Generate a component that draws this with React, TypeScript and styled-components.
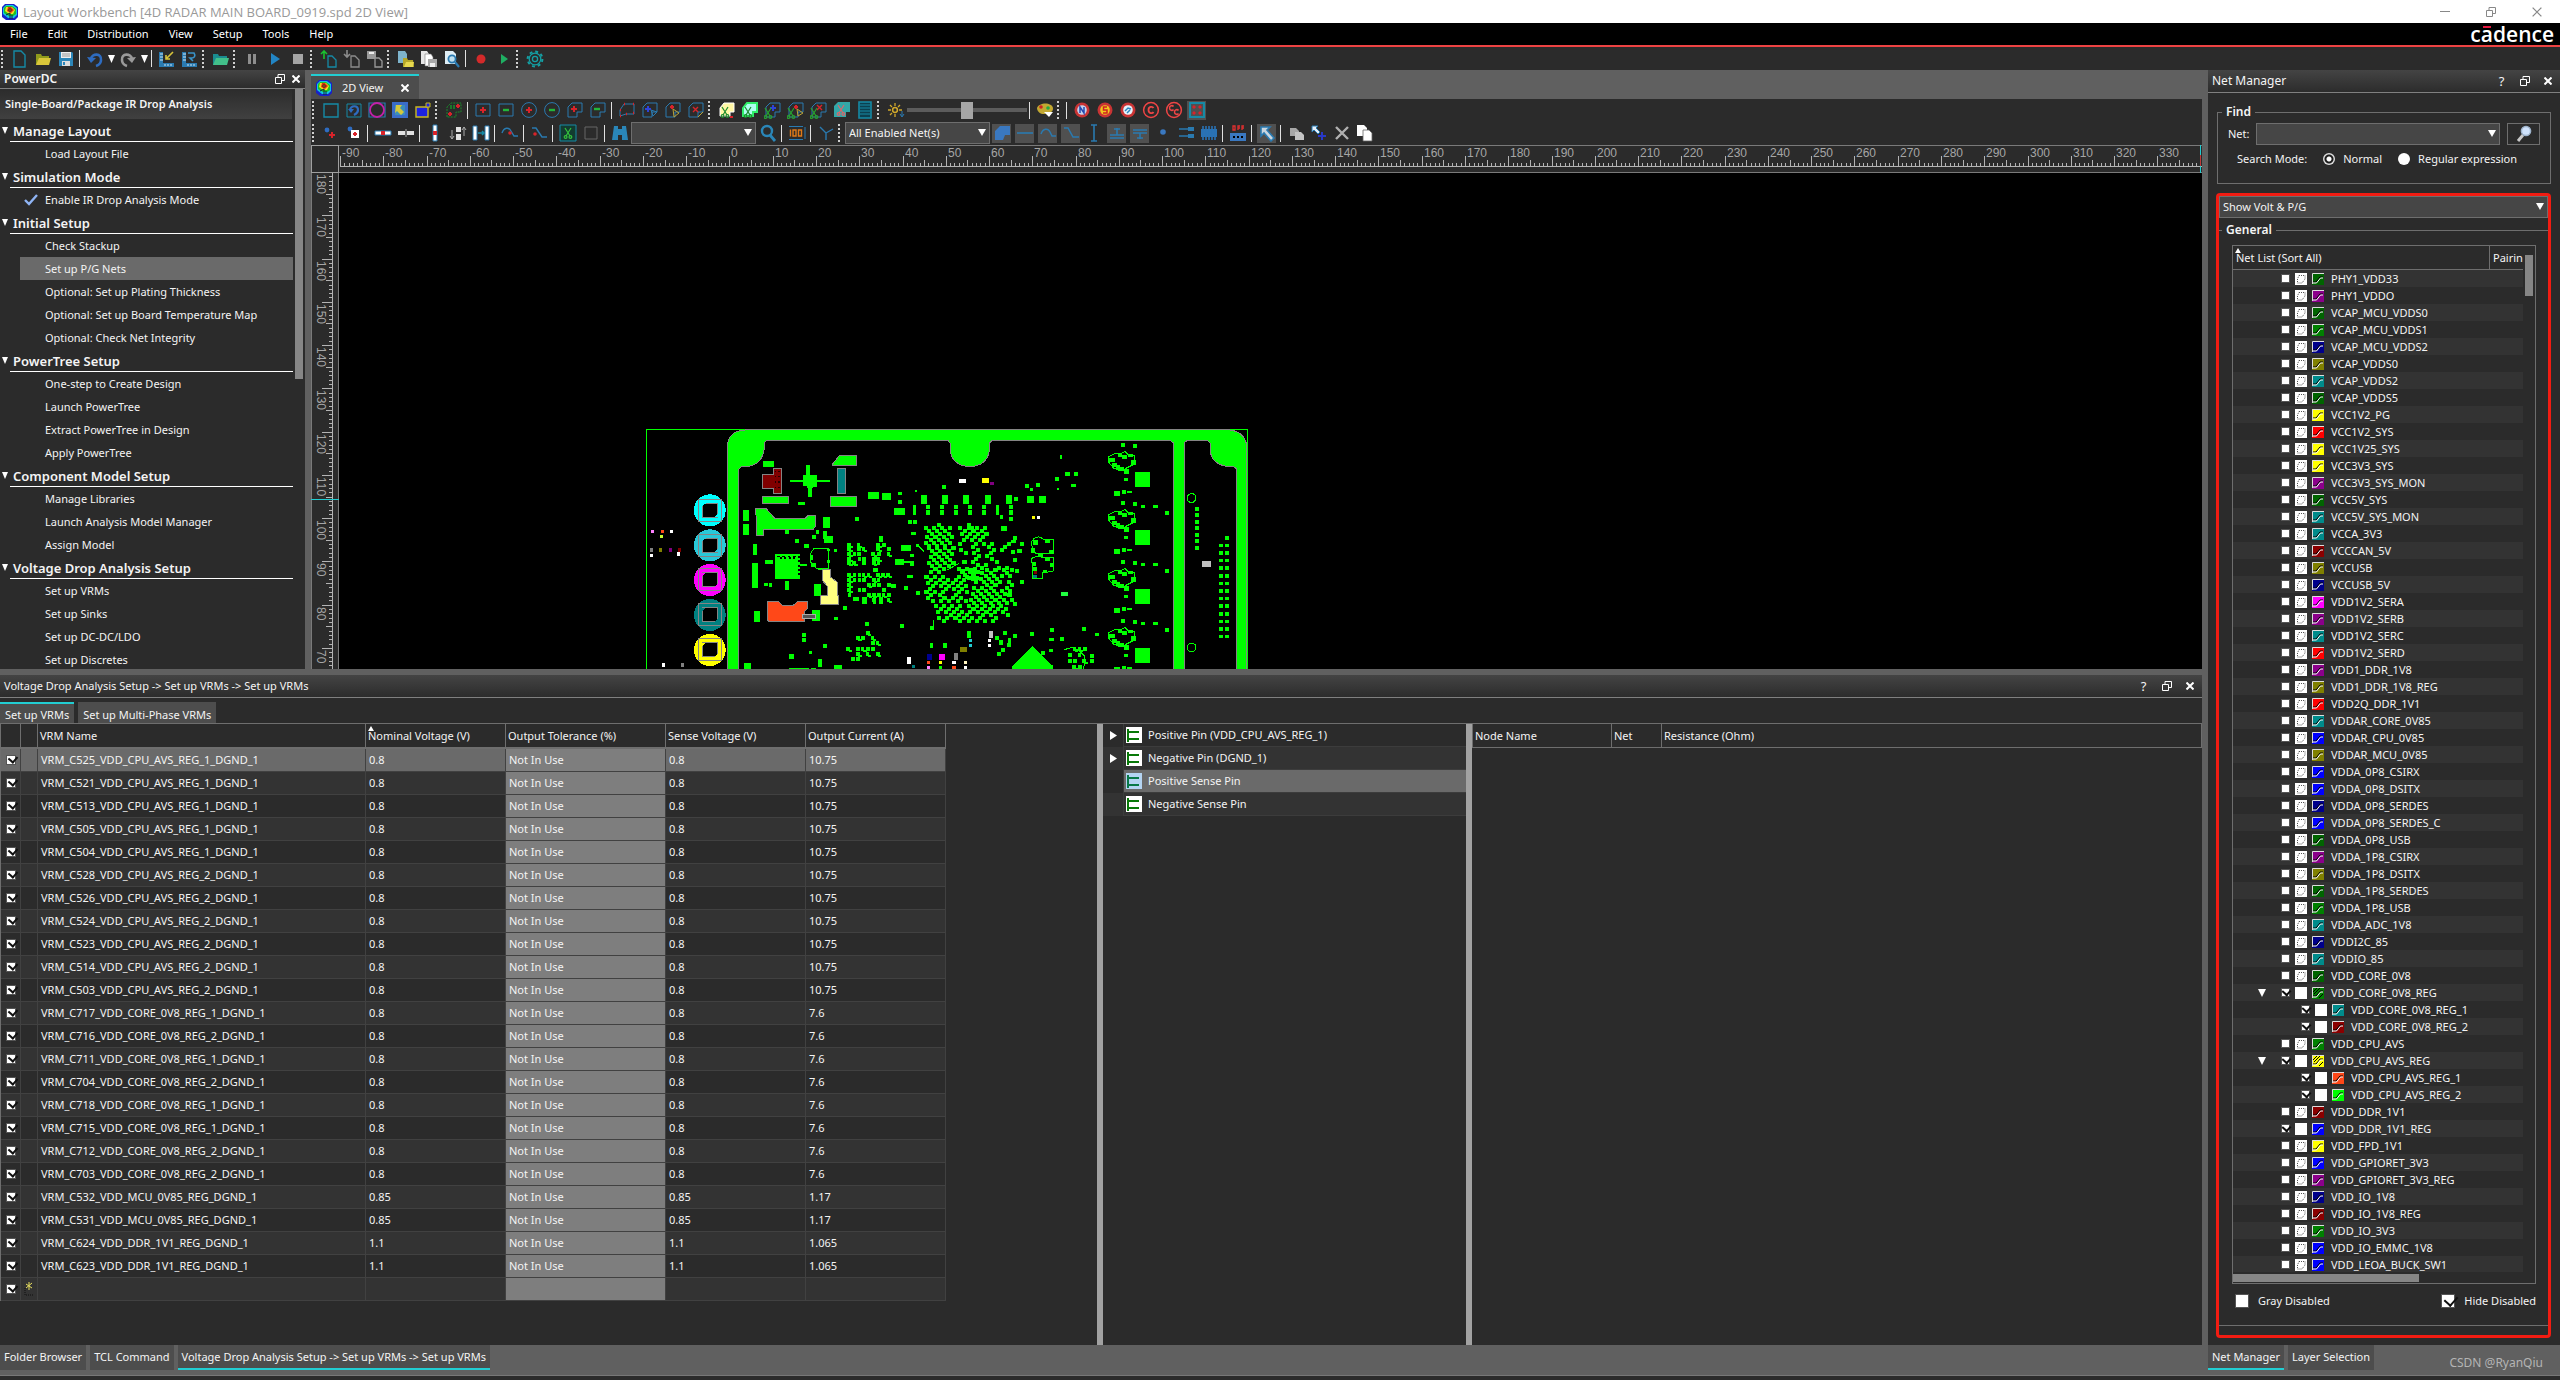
import React from 'react';
import styled, { createGlobalStyle, css } from 'styled-components';

const C = {
  panel: '#2b2b2b',
  stripe: '#333333',
  frame: '#606060',
  line: '#6e6e6e',
  field: '#464646',
  tab: '#4d4d4d',
  select: '#6a6a6a',
  text: '#f4f4f4',
  cyan: '#22cdd2',
  blue: '#2a7ab0',
  teal: '#168aa6',
  red: '#f21c12',
};

const Global = createGlobalStyle`
  * { box-sizing: border-box; }
  html, body { margin: 0; background: ${C.panel}; }
  body, button, input, select { font-family: "Noto Sans", "Open Sans", sans-serif; font-size: 11px; line-height: 16px; color: ${C.text}; }
  button { padding: 0; border: 0; background: none; }
  ul { list-style: none; margin: 0; padding: 0; }
  svg { display: block; }
`;

/* ---------- shell ---------- */
const Shell = styled.div`
  height: 100vh;
  display: flex;
  flex-direction: column;
  overflow: hidden;
  background: ${C.panel};
`;
const TitleBar = styled.header`
  display: flex;
  align-items: center;
  height: 23px;
  padding-left: 2px;
  background: #fff;
  color: #999;
`;
const TitleText = styled.h1`
  flex: 1;
  margin: 0 0 0 5px;
  font-family: "Open Sans", sans-serif;
  font-size: 13px;
  font-weight: 400;
  line-height: 20px;
`;
const WindowButton = styled.button`
  width: 46px;
  height: 23px;
  display: grid;
  place-items: center;
`;
const MenuBar = styled.nav`
  display: flex;
  align-items: center;
  height: 24px;
  background: #000;
  border-bottom: 2px solid #ee4343;
`;
const MenuItem = styled.button`
  padding: 0 10px;
  color: #fff;
`;
const Brand = styled.div`
  margin-left: auto;
  padding-right: 6px;
  font: 600 21px/22px "Open Sans", sans-serif;
  color: #fff;
`;
const Accent = styled.span`
  position: relative;
  &::before {
    content: '';
    position: absolute;
    left: 2px;
    right: 2px;
    top: 6px;
    height: 2px;
    background: #e4173e;
  }
`;
const Bar = styled.div<{ $h: number }>`
  display: flex;
  align-items: center;
  height: ${p => p.$h}px;
  background: ${C.panel};
`;
const Workspace = styled.main`
  flex: 1;
  min-height: 0;
  display: grid;
  grid-template-columns: minmax(0, 1fr) 352px;
  column-gap: 6px;
  background: ${C.frame};
  border-bottom: 1px solid #777;
`;
const MainColumn = styled.div`
  display: grid;
  grid-template-rows: minmax(0, 605fr) minmax(0, 670fr) 30px;
  min-height: 0;
  & > :first-child { margin-bottom: 6px; }
`;
const TopRow = styled.div`
  display: grid;
  grid-template-columns: 305px minmax(0, 1fr);
  column-gap: 6px;
  min-height: 0;
`;
const StatusBar = styled.footer`
  height: 4px;
  background: ${C.panel};
`;
const PanelHeader = styled.div<{ $h: number }>`
  display: flex;
  align-items: center;
  height: ${p => p.$h}px;
  padding: 0 1px 0 4px;
  background: linear-gradient(#444, #2c2c2c);
  border-bottom: 1px solid #808080;
`;
const PanelTitle = styled.h2<{ $bold?: boolean; $big?: boolean }>`
  flex: 1;
  margin: 0;
  font-size: ${p => (p.$big ? 12 : 11)}px;
  line-height: 16px;
  font-weight: ${p => (p.$bold ? 600 : 400)};
`;
const HeadButton = styled.button<{ $w?: number }>`
  width: ${p => p.$w ?? 23}px;
  height: 16px;
  display: grid;
  place-items: center;
  font-size: 13px;
`;

/* ---------- tool bars ---------- */
const Grip = styled.span`
  flex: none;
  width: 8px;
  height: 18px;
  background: repeating-linear-gradient(#d0d0d0 0 2px, transparent 2px 4px) 1px 0 / 2px 100% no-repeat;
`;
const Sep = styled.span`
  flex: none;
  width: 6px;
  height: 17px;
  background: linear-gradient(#e0e0e0, #e0e0e0) 2px 0 / 1px 100% no-repeat;
`;
const ToolButton = styled.button<{ $on?: boolean }>`
  flex: none;
  width: 23px;
  height: 22px;
  display: grid;
  place-items: center;
  background: ${p => (p.$on ? 'linear-gradient(#505050, #505050) center / 19px 19px no-repeat' : 'none')};
`;
const CaretButton = styled.button`
  flex: none;
  width: 10px;
  height: 20px;
  display: grid;
  place-items: center;
`;
const Slider = styled.input`
  width: 120px;
  height: 18px;
  margin: 0;
  appearance: none;
  background: linear-gradient(#5c5c5c, #5c5c5c) center / 100% 4px no-repeat;
  &::-webkit-slider-thumb {
    appearance: none;
    width: 12px;
    height: 17px;
    background: #a6a6a6;
  }
`;
const ComboWrap = styled.span<{ $w?: number }>`
  position: relative;
  display: block;
  flex: ${p => (p.$w ? 'none' : '1')};
  width: ${p => (p.$w ? p.$w + 'px' : 'auto')};
  &::after {
    content: '';
    position: absolute;
    right: 4px;
    top: 7px;
    border: 4px solid transparent;
    border-top: 7px solid #fff;
    border-bottom: 0;
    pointer-events: none;
  }
`;
const Combo = styled.select`
  display: block;
  width: 100%;
  height: 22px;
  padding: 0 14px 0 3px;
  appearance: none;
  border: 1px solid ${C.line};
  border-radius: 0;
  background: ${C.field};
`;

/* ---------- workflow tree ---------- */
const Panel = styled.section`
  display: flex;
  flex-direction: column;
  min-width: 0;
  min-height: 0;
  background: ${C.panel};
`;
const FlowBody = styled.div`
  flex: 1;
  min-height: 0;
  display: grid;
  grid-template-columns: minmax(0, 1fr) 12px;
  overflow: hidden;
`;
const FlowTitle = styled.h3`
  margin: 0 1px 0 0;
  padding: 7px 5px;
  font-size: 11px;
  line-height: 16px;
  font-weight: 600;
  background: linear-gradient(#2c2c2c, #404040);
`;
const FlowList = styled.div`
  overflow: hidden;
`;
const FlowGroup = styled.h4`
  display: flex;
  align-items: center;
  gap: 4px;
  height: 23px;
  margin: 0;
  padding-left: 1px;
  font-size: 13px;
  line-height: 16px;
  font-weight: 600;
  background: linear-gradient(#fff, #fff) 10px 100% / 100% 1px no-repeat;
`;
const FlowItem = styled.button<{ $on?: boolean }>`
  display: flex;
  align-items: center;
  width: calc(100% - 20px);
  height: 23px;
  margin-left: 20px;
  text-align: left;
  background: ${p => (p.$on ? C.select : 'transparent')};
`;
const FlowMark = styled.span`
  width: 25px;
  padding-left: 4px;
`;
const ScrollTrack = styled.div`
  padding-left: 2px;
`;
const ScrollThumb = styled.div<{ $w: number; $h: string }>`
  width: ${p => p.$w}px;
  height: ${p => p.$h};
  background: #868686;
`;

/* ---------- 2D view ---------- */
const TabStrip = styled.div`
  display: flex;
  align-items: flex-end;
  height: 29px;
  background: ${C.frame};
`;
const ViewTab = styled.div`
  display: flex;
  align-items: center;
  gap: 10px;
  height: 25px;
  padding: 0 3px 0 5px;
  background: ${C.tab};
  border-top: 2px solid ${C.cyan};
`;
const ViewGrid = styled.div`
  flex: 1;
  min-height: 0;
  display: grid;
  grid-template-columns: 28px minmax(0, 1fr);
  grid-template-rows: 28px minmax(0, 1fr);
  background: #000;
`;
const RulerCell = styled.div`
  overflow: hidden;
  min-height: 0;
  background: ${C.panel};
  & > svg { width: 100%; height: 100%; }
  & text { font: 12px "Liberation Sans", Arial, sans-serif; fill: #a6a6a6; }
`;
const Corner = styled.div`
  border: 1px solid #a0a0a0;
  background: ${C.panel};
`;
const Board = styled.div`
  overflow: hidden;
  min-height: 0;
  & > svg { width: 100%; height: 100%; }
`;

/* ---------- bottom dock ---------- */
const DockTabs = styled.div`
  display: flex;
  gap: 4px;
  padding-top: 4px;
  border-bottom: 1px solid ${C.line};
`;
const DockTab = styled.button<{ $on?: boolean }>`
  height: 21px;
  padding: 3px 5px 0;
  background: ${C.tab};
  border-top: 2px solid ${p => (p.$on ? C.cyan : C.tab)};
`;
const DockBody = styled.div`
  flex: 1;
  min-height: 0;
  display: grid;
  grid-template-columns: minmax(0, 1097fr) minmax(0, 369fr) minmax(0, 736fr);
`;
const Pane = styled.div<{ $split?: boolean }>`
  overflow: hidden;
  min-width: 0;
  ${p => p.$split && css`
    border-left: 6px solid #a2a2a2;
  `}
`;
const Grid = styled.table`
  border-collapse: separate;
  border-spacing: 0;
  border-left: 1px solid ${C.line};
  table-layout: fixed;
`;
const Th = styled.th<{ $w?: number }>`
  position: relative;
  width: ${p => (p.$w ? p.$w + 'px' : 'auto')};
  height: 25px;
  padding: 0 2px;
  text-align: left;
  font-weight: 400;
  white-space: nowrap;
  border-right: 1px solid ${C.line};
  border-bottom: 2px solid ${C.line};
`;
const SortMark = styled.span`
  position: absolute;
  left: 2px;
  top: 2px;
  border: 3px solid transparent;
  border-bottom: 5px solid #fff;
  border-top: 0;
`;
const Tr = styled.tr<{ $on?: boolean; $odd?: boolean }>`
  background: ${p => (p.$on ? C.select : p.$odd ? C.stripe : C.panel)};
`;
const Td = styled.td<{ $dim?: boolean; $check?: boolean }>`
  height: 23px;
  padding: 0 2px 0 ${p => (p.$check ? 5 : 3)}px;
  white-space: nowrap;
  border-right: 1px solid #414141;
  border-bottom: 1px solid #414141;
  ${p => p.$dim && css`
    background: #7e7e7e;
  `}
`;
const WideTable = styled(Grid)`
  width: 100%;
`;
const ThinTh = styled(Th)`
  height: 24px;
  border-bottom-width: 1px;
`;
const PinRow = styled.li<{ $on?: boolean; $odd?: boolean }>`
  display: grid;
  grid-template-columns: 20px minmax(0, 1fr);
  height: 23px;
  background: ${p => (p.$odd ? C.stripe : C.panel)};
`;
const PinArrow = styled.span`
  display: grid;
  place-items: center;
`;
const PinLabel = styled.span<{ $on?: boolean }>`
  display: flex;
  align-items: center;
  gap: 6px;
  padding-left: 2px;
  border-left: 1px solid #3c3c3c;
  border-bottom: 1px solid #3c3c3c;
  background: ${p => (p.$on ? C.select : 'transparent')};
`;
const FootTabs = styled.div`
  display: flex;
  align-items: flex-start;
  gap: 4px;
  height: 30px;
  background: ${C.frame};
`;
const FootTab = styled.button<{ $on?: boolean }>`
  height: 25px;
  padding: 0 4px;
  background: ${C.tab};
  border-bottom: 2px solid ${p => (p.$on ? C.cyan : C.tab)};
`;

/* ---------- net manager ---------- */
const NetColumn = styled.aside`
  display: flex;
  flex-direction: column;
  min-height: 0;
  background: ${C.panel};
`;
const FindBox = styled.fieldset`
  min-width: 0;
  margin: 11px 9px 0;
  padding: 3px 10px 16px;
  border: 1px solid ${C.line};
`;
const Legend = styled.legend`
  padding: 0 4px;
  font-size: 12px;
  line-height: 16px;
  font-weight: 600;
`;
const FindLegend = styled(Legend)`
  margin-left: -6px;
`;
const FindRow = styled.div`
  display: flex;
  align-items: center;
  gap: 7px;
`;
const FindButton = styled.button`
  width: 33px;
  height: 22px;
  display: grid;
  place-items: center;
  border: 1px solid ${C.line};
`;
const ModeRow = styled.div`
  display: flex;
  align-items: center;
  gap: 8px;
  padding: 6px 0 0 9px;
`;
const RadioLabel = styled.label`
  display: flex;
  align-items: center;
  gap: 8px;
  margin-left: 8px;
`;
const Radio = styled.input`
  appearance: none;
  width: 12px;
  height: 12px;
  margin: 0;
  border-radius: 50%;
  background: #fff;
  &:checked {
    background: radial-gradient(circle, #fff 0 2px, #1c1c1c 3px 4px, #ddd 5px);
  }
`;
const NetFrame = styled.div`
  flex: 1;
  min-height: 0;
  display: flex;
  flex-direction: column;
  margin: 9px 9px 7px 8px;
  border: 3px solid ${C.red};
  border-radius: 4px;
`;
const GeneralBox = styled.fieldset`
  flex: 1;
  min-width: 0;
  min-height: 0;
  display: flex;
  flex-direction: column;
  margin: 4px 0 9px;
  padding: 7px 12px 0 13px;
  border: solid ${C.line};
  border-width: 1px 0;
`;
const GeneralLegend = styled(Legend)`
  margin-left: -10px;
`;
const NetList = styled.div`
  flex: 1;
  min-height: 0;
  display: grid;
  grid-template-columns: minmax(0, 1fr) 12px;
  grid-template-rows: minmax(0, 1fr) 11px;
  border: 1px solid ${C.line};
`;
const NetInner = styled.div`
  overflow: hidden;
`;
const NetHead = styled.div`
  display: grid;
  grid-template-columns: minmax(0, 1fr) 34px;
  height: 24px;
  border-bottom: 1px solid ${C.line};
`;
const NetHeadCell = styled.span<{ $edge?: boolean }>`
  position: relative;
  overflow: hidden;
  padding: 4px 0 0 3px;
  white-space: nowrap;
  border-left: ${p => (p.$edge ? `1px solid ${C.line}` : '0')};
`;
const NetRow = styled.li<{ $odd?: boolean; $child?: boolean }>`
  display: flex;
  align-items: center;
  height: 17px;
  padding-left: ${p => (p.$child ? 45 : 25)}px;
  background: ${p => (p.$odd ? C.panel : C.stripe)};
`;
const NetArrow = styled.span`
  width: 23px;
`;
const NetLabel = styled.label`
  display: flex;
  align-items: center;
  gap: 5px;
  & > span { margin-left: 2px; }
`;
const Tick = styled.input<{ $s: number }>`
  position: relative;
  flex: none;
  appearance: none;
  width: ${p => p.$s}px;
  height: ${p => p.$s}px;
  margin: 0;
  background: #fff;
  outline: 1px solid #555;
  outline-offset: -1px;
  &:checked::after {
    content: '';
    position: absolute;
    left: ${p => Math.round(p.$s / 4)}px;
    top: ${p => (p.$s > 10 ? 1 : 0)}px;
    width: ${p => p.$s - 4}px;
    height: ${p => (p.$s > 10 ? 7 : 5)}px;
    border: solid #111;
    border-width: 0 0 2px 2px;
    transform: rotate(-48deg);
  }
`;
const VScroll = styled.div`
  padding: 9px 0 0 2px;
`;
const HScroll = styled.div`
  padding-top: 2px;
`;
const HThumb = styled.div`
  width: 64%;
  height: 8px;
  background: #868686;
`;
const OptionRow = styled.div`
  display: flex;
  justify-content: space-between;
  padding: 9px 0 16px 3px;
`;
const OptionLabel = styled.label`
  display: flex;
  align-items: center;
  gap: 9px;
`;
const FootNote = styled.span`
  margin: 8px 17px 0 auto;
  font-size: 12px;
  line-height: 20px;
  color: #b4b4b4;
`;

/* ---------- icons ---------- */
const B = C.blue;
const T = C.teal;
const poly = 'M2 16V6l4-4h10v9h-5v5z';
const scissors = (c: string, x = 0, y = 0) => (
  <g transform={`translate(${x} ${y})`} stroke={c} fill="none" strokeWidth="1.2">
    <path d="M1 0l5 8M7 0L2 8" /><circle cx="1.6" cy="9" r="1.4" /><circle cx="6.4" cy="9" r="1.4" />
  </g>
);
const plus = (x: number, y: number, c = '#d8232a', s = 3) => <path d={`M${x - s} ${y}h${2 * s}M${x} ${y - s}v${2 * s}`} stroke={c} strokeWidth="2" />;
const minus = (x: number, y: number) => <path d={`M${x - 3} ${y}h6`} stroke="#23b53a" strokeWidth="2.4" />;

const icons: Record<string, React.ReactNode> = {
  newDoc: <path d="M3 1h7l4 4v12H3z" fill="none" stroke={T} strokeWidth="1.4" />,
  folder: <><path d="M2 15V4h5l1 2h7v9z" fill="#8f9a1c" /><path d="M2 15l3-7h12l-2 7z" fill="#d9c63a" /></>,
  tealFolder: <><path d="M1 15V4h5l1 2h8v9z" fill="#1a8c90" /><path d="M1 15l3-7h13l-2 7z" fill="#42c08a" /></>,
  save: <><path d="M2 2h13l1 1v13H2z" fill="#2c86b8" /><path d="M4 2h10v6H4z" fill="#eee" /><path d="M5 4h8M5 6h8" stroke="#999" /><path d="M5 11h8v5H5z" fill="#ddd" /><path d="M6 12h2v3H6z" fill="#2c86b8" /></>,
  undo: <><path d="M5 9c1-6 11-6 10 1 0 3-2 5-5 6" fill="none" stroke="#2e6cc0" strokeWidth="2.6" /><path d="M1 7l4 6 5-5z" fill="#2e6cc0" /></>,
  redo: <><path d="M13 9C12 3 2 3 3 10c0 3 2 5 5 6" fill="none" stroke="#9a9a9a" strokeWidth="2.6" /><path d="M17 7l-4 6-5-5z" fill="#9a9a9a" /></>,
  rulerA: <><path d="M3 2v13h13" stroke={B} strokeWidth="4" fill="none" /><path d="M2 4h3M2 7h3M2 10h3M7 14v2M10 14v2M13 14v2" stroke="#cfe6f2" /><path d="M15 2L8 9M8 5v4h4" stroke="#d8c43a" strokeWidth="1.6" fill="none" /></>,
  rulerB: <><path d="M3 2v13h13" stroke={B} strokeWidth="4" fill="none" /><path d="M2 4h3M2 7h3M2 10h3M7 14v2M10 14v2M13 14v2" stroke="#cfe6f2" /><path d="M7 3h6c2 3 0 5-2 5H9l3 3" stroke="#3a93c8" strokeWidth="1.6" fill="none" /></>,
  pause: <path d="M5 4h3v10H5zM10 4h3v10h-3z" fill="#8e8e8e" />,
  play: <path d="M5 3l9 6-9 6z" fill="#2285c4" />,
  stop: <path d="M4 4h10v10H4z" fill="#a5a5a5" />,
  docUp: <><path d="M8 6h4l4 4v7H8z" fill="none" stroke={T} strokeWidth="1.3" /><path d="M4 9V1M1 4l3-3 3 3" stroke="#19c22f" strokeWidth="1.6" fill="none" /></>,
  docDown: <><path d="M8 6h4l4 4v7H8z" fill="none" stroke="#8c8c8c" strokeWidth="1.3" /><path d="M4 0v7M1 4l3 3 3-3" stroke="#8c8c8c" strokeWidth="1.6" fill="none" /></>,
  docSave: <><path d="M1 1h9v8H1z" fill="#9a9a9a" /><path d="M3 2h5v2H3z" fill="#eee" /><path d="M9 8h4l3 3v6H9z" fill={C.panel} stroke="#9a9a9a" strokeWidth="1.3" /></>,
  copyFolder: <><path d="M1 1h7l2 3v9H1z" fill="#7eb4cc" /><path d="M6 17V8h4l1 2h5l1 7z" fill="#b5a82a" /><path d="M7 17l2-5h8l-1 5z" fill="#e6d84e" /></>,
  copySave: <><path d="M1 1h6l2 3v10H1z" fill="#e6e6e6" /><path d="M5 4h6l2 3v9H5z" fill="#fff" stroke="#777" strokeWidth=".6" /><path d="M8 9h9v8H8z" fill="#a9a9a9" /><path d="M10 13h5v4h-5z" fill="#eee" /></>,
  docFind: <><path d="M2 1h8l3 3v10H2z" fill="#dfeef5" /><circle cx="9" cy="9" r="3.6" fill="#bfe0f0" stroke={B} strokeWidth="1.8" /><path d="M12 12l4 5" stroke={B} strokeWidth="2.2" /></>,
  rec: <circle cx="9" cy="9" r="4.5" fill="#d32a2a" />,
  playGreen: <path d="M6 4l7 5-7 5z" fill="#1fae62" />,
  gear: <><circle cx="9" cy="9" r="5.8" fill="none" stroke="#14a0a4" strokeWidth="1.3" /><circle cx="9" cy="9" r="2.6" fill="none" stroke="#14a0a4" strokeWidth="1.3" /><circle cx="9" cy="9" r="7.4" fill="none" stroke="#14a0a4" strokeWidth="2" strokeDasharray="2.900 2.910" /></>,
  rect: <path d="M2 3h14v13H2z" fill="none" stroke={T} strokeWidth="1.4" />,
  rectUndo: <><path d="M2 3h14v13H2z" fill="none" stroke={T} /><path d="M5 9c1-5 8-5 8 0 0 3-2 4-4 5" stroke="#2e6cc0" strokeWidth="2.2" fill="none" /><path d="M3 8l3 4 3-4z" fill="#2e6cc0" /></>,
  circle: <><path d="M1 2h16v14H1z" fill="none" stroke={B} strokeWidth="1.2" /><circle cx="9" cy="9" r="7" fill="none" stroke="#c420a8" strokeWidth="1.8" /></>,
  extent: <><path d="M1 1h16v16H1z" fill="#3a6cc8" /><path d="M4 4h10v10H4z" fill="#3c8fb8" /><path d="M5 4h6L9 7l4 4-3 3-4-4-2 2z" fill="#d6c83c" /></>,
  blueRect: <><path d="M2 6h12v10H2z" fill="#1c22e0" stroke="#c8b820" strokeWidth="1.4" /><path d="M12 2h4v4h-4z" fill="#1c22e0" stroke="#c8b820" /></>,
  gridPlus: <><path d={poly} fill="none" stroke="#1b8a2c" strokeDasharray="2 1" />{plus(13, 5, '#d8232a', 2)}{plus(5, 13, '#d8232a', 2)}<path d="M6 4v4M9 4v4" stroke="#1b8a2c" strokeWidth="1.6" /></>,
  rectPlus: <><path d="M2 3h14v12H2z" fill="none" stroke={B} />{plus(9, 9)}</>,
  rectMinus: <><path d="M2 3h14v12H2z" fill="none" stroke={B} />{minus(9, 9)}</>,
  circPlus: <><circle cx="9" cy="9" r="7.4" fill="none" stroke={B} />{plus(9, 9)}</>,
  circMinus: <><circle cx="9" cy="9" r="7.4" fill="none" stroke={B} />{minus(9, 9)}</>,
  polyPlus: <><path d={poly} fill="none" stroke={B} />{plus(8, 8)}</>,
  polyMinus: <><path d={poly} fill="none" stroke={B} />{minus(8, 8)}</>,
  polyRed: <><path d="M2 15V9l4-6h10v10H8z" fill="none" stroke={B} /><path d="M2 15h1M2 9h1M6 3h1M15 3h1M15 12h1M8 13h1" stroke="#d8232a" strokeWidth="2.4" /></>,
  polyMove: <><path d={poly} fill="none" stroke={B} />{plus(7, 8, '#2e43d8')}<path d="M10 9l6 2-4 4z" fill="none" stroke={B} /></>,
  polyAdd: <><path d={poly} fill="none" stroke={B} />{plus(8, 6, '#d8232a', 2)}<path d="M9 8l6 4-5 4z" fill="none" stroke="#b9a238" /></>,
  polyDel: <><path d={poly} fill="none" stroke={B} /><path d="M6 6l5 5M11 6l-5 5" stroke="#d8232a" strokeWidth="1.4" /><path d="M16 11l-5 5" stroke="#b9a238" /></>,
  cutYellow: <><path d="M2 15V7l4-5h10v9h-4v4z" fill="#fff7a4" stroke="#fff" />{scissors('#1b8a2c', 3, 6)}<path d="M12 16h3" stroke="#d8232a" strokeWidth="2" /></>,
  cutGreen: <><path d="M2 15V7l4-5h10v9h-4v4z" fill="#aefff0" stroke="#2ff06a" strokeWidth="2" />{scissors('#1b8a2c', 3, 6)}</>,
  cutMove: <><path d={poly} fill="none" stroke={B} />{plus(9, 7, '#2e43d8')}{scissors('#28a32f', 0, 7)}</>,
  cutAdd: <><path d={poly} fill="none" stroke={B} />{plus(9, 6, '#d8232a', 2)}<path d="M10 8l6 4-5 3z" fill="none" stroke="#b9a238" />{scissors('#28a32f', 0, 7)}</>,
  cutDel: <><path d={poly} fill="none" stroke={B} /><path d="M7 4l5 5M12 4L7 9" stroke="#d8232a" strokeWidth="1.4" />{scissors('#28a32f', 0, 7)}</>,
  cutTeal: <><path d="M1 16V5l4-4h12v10h-4v5z" fill="#32a7a8" />{scissors('#d8686c', 4, 4)}</>,
  table: <><path d="M3 1h12v16H3z" fill="#0c4050" stroke={T} strokeWidth="1.6" /><path d="M4 4h10M4 7h10M4 10h10M4 13h10" stroke={T} /></>,
  sun: <><circle cx="8" cy="9" r="2.4" fill="none" stroke="#d1a82a" strokeWidth="1.5" /><path d="M8 2v3M8 13v3M1 9h3M12 9h3M3 4l2 2M13 4l-2 2M3 14l2-2" stroke="#d1a82a" strokeWidth="1.3" /><path d="M15 10v5M13 13l2 3 2-3" stroke={B} fill="none" /></>,
  palette: <><path d="M1 7c2-6 15-6 16 0 0 5-3 4-6 4-1 4-10 2-10-4z" fill="#c2a832" /><circle cx="5" cy="6" r="1.8" fill="#c22" /><circle cx="12" cy="7" r="1.8" fill="#2a4" /><path d="M8 11h9l-4 5z" fill="#fff" /></>,
  markN: <><circle cx="9" cy="9" r="7.5" fill="#c93434" /><circle cx="9" cy="9" r="4.8" fill="#c4d4ee" /><path d="M7 12V6l4 6V6" stroke="#2548b0" strokeWidth="1.5" fill="none" /></>,
  markS: <><circle cx="9" cy="9" r="7.5" fill="#c93434" /><circle cx="9" cy="9" r="4.8" fill="#f0c81e" /><path d="M11 6H7.500v3H11v3H7" stroke="#d02020" strokeWidth="1.5" fill="none" /></>,
  markX: <><circle cx="9" cy="9" r="7.5" fill="#c93434" /><circle cx="9" cy="9" r="4.8" fill="#e6f2fa" /><path d="M6 10l3-3 3 1M8 12l3-3" stroke="#2a86c0" strokeWidth="1.5" fill="none" /></>,
  markC: <><circle cx="9" cy="9" r="7.4" fill="none" stroke="#ee4545" strokeWidth="1.5" /><path d="M11.500 7c-1-2-5-1.500-5 2s4 4 5 2" stroke="#ee4545" strokeWidth="1.8" fill="none" /></>,
  markCC: <><circle cx="9" cy="9" r="7.4" fill="none" stroke="#ee4545" strokeWidth="1.5" /><path d="M8.500 5.500c-1-1.500-4-1-4 1.500s3 3 4 1.500M13.500 9.500c-1-1.500-4-1-4 1.500s3 3 4 1.500" stroke="#ee4545" strokeWidth="1.5" fill="none" /></>,
  stars: <><path d="M2 2h14v14H2z" fill="none" stroke={T} strokeWidth="2" />{plus(6, 6, '#d8232a', 1.5)}{plus(12, 6, '#d8232a', 1.5)}{plus(6, 12, '#d8232a', 1.5)}{plus(12, 12, '#d8232a', 1.5)}</>,
  dotPlus: <><circle cx="5" cy="6" r="2.4" fill="#2e6cc0" />{plus(10, 11)}</>,
  dotBox: <><circle cx="5" cy="5" r="2.4" fill="#2e6cc0" /><path d="M6 6h8v8H6z" fill="#fff" />{plus(10, 10, '#d8232a', 2)}</>,
  padA: <><path d="M1 7h16v4H1z" fill="#fff" stroke={B} /><path d="M7 7h4v4H7z" fill="#d8232a" /></>,
  padB: <><path d="M1 7h7v4H1zM10 7h7v4h-7z" fill="#e2e2e2" /><path d="M9 5v8" stroke="#aaa" /></>,
  padV: <><path d="M7 1h4v16H7z" fill="#fff" stroke={B} /><path d="M7 7h4v4H7z" fill="#d8232a" /></>,
  padSwap: <><path d="M7 3h5v5H7zM7 10h5v6H7z" fill="#e2e2e2" /><path d="M3 6v9M1 12l2 3 2-3M15 12V3M13 6l2-3 2 3" stroke="#aaa" fill="none" /></>,
  padH: <><path d="M1 2h4v14H1zM13 2h4v14h-4z" fill="#fff" stroke={B} /><path d="M6 9h6M10 7l2 2-2 2" stroke={T} fill="none" strokeWidth="1.6" /></>,
  curve: <><path d="M1 9c2-6 7-6 9-2l3 5h4" fill="none" stroke={B} strokeWidth="1.4" /><circle cx="9" cy="9" r="1.8" fill="#d8232a" /></>,
  bend: <><path d="M2 4h4l6 9h5" fill="none" stroke={B} strokeWidth="1.4" /><circle cx="5" cy="10" r="1.8" fill="#d8232a" /></>,
  cutBox: <><path d="M1 1h16v16H1z" fill="#123c30" stroke={T} />{scissors('#35c23c', 5, 4)}</>,
  emptyBox: <path d="M3 3h12v12H3z" fill="none" stroke="#666" />,
  binoc: <path d="M3 2h4v3h4V2h4l2 14h-6v-5H7v5H1z" fill="#2a86b8" />,
  search: <><circle cx="8" cy="7" r="5" fill="none" stroke="#2a86b8" strokeWidth="2.4" /><path d="M11 11l5 6" stroke="#2a86b8" strokeWidth="2.8" /></>,
  hundred: <><path d="M1 2.500h14M1 15.500h14M17 3v12" stroke={B} /><path d="M2.500 5.500v7M5 6h3v6H5zM10.500 6h3v6h-3z" fill="none" stroke="#e07a18" strokeWidth="1.4" /></>,
  fork: <path d="M3 3l6 6v7M9 9l7-4" fill="none" stroke={B} strokeWidth="1.4" />,
  shape: <path d="M2 16V7l5-5h10v9h-5l-2 5z" fill="#3a78c0" />,
  hline: <path d="M1 9h16" stroke={B} strokeWidth="1.6" />,
  arc: <path d="M2 10c2-6 7-6 9-2l2 4h4" fill="none" stroke={B} strokeWidth="1.5" />,
  bend2: <path d="M2 4h4l5 9h6" fill="none" stroke={B} strokeWidth="1.5" />,
  vline: <path d="M6 1h6M6 17h6M9 1v16" stroke={B} strokeWidth="1.6" />,
  strA: <path d="M2 11h14M2 14h14M9 4v7M6 5h6" stroke={B} strokeWidth="1.6" />,
  strB: <path d="M2 6h14M2 9h14M9 9v6M6 14h6" stroke={B} strokeWidth="1.6" />,
  dot: <circle cx="9" cy="8" r="2.8" fill="#3a78c0" />,
  link: <><path d="M2 5h10M2 12h10" stroke={B} strokeWidth="1.5" /><path d="M11 3h6v4h-6zM11 10h6v4h-6z" fill={B} /></>,
  chip: <><path d="M1 5h16v8H1z" fill="#2a72b4" /><path d="M3 2v14M6 2v14M9 2v14M12 2v14M15 2v14" stroke="#2a72b4" strokeWidth="1.6" /></>,
  off: <><path d="M1 9h16v8H1z" fill="#3a78c0" /><path d="M4 13h2M8 13h2M12 13h2" stroke="#000" strokeWidth="2" /><path d="M4 2h2v4H4zM9 6V2h2M9 4h2M13 6V2h2M13 4h2" fill="none" stroke="#e23030" strokeWidth="1.3" /></>,
  pick: <path d="M3 3h9l-3 3 7 8-3 3-7-8-3 3z" fill="#c9d5df" stroke={B} strokeWidth="1.6" />,
  grayDocs: <><path d="M3 4h6l3 3v5H3z" fill="#a8a8a8" /><path d="M8 8h6l3 3v5H8z" fill="#c4c4c4" /></>,
  moveArrow: <><path d="M2 2h6L6 4l4 4-2 2-4-4-2 2z" fill="#e6f0fa" stroke={B} />{plus(12, 12, '#2838c8', 4)}</>,
  cross: <path d="M3 3l12 12M15 3L3 15" stroke="#b0b0b0" strokeWidth="2.4" />,
  docs: <><path d="M1 1h7l3 3v8H1z" fill="#fff" /><path d="M7 6h6l3 3v8H7z" fill="#fff" stroke="#666" strokeWidth=".8" /></>,
};

const Icon = ({ name }: { name: string }) => (
  <svg width="18" height="18" viewBox="0 0 18 18" aria-hidden="true">{icons[name]}</svg>
);
const Down = () => (
  <svg width="8" height="8" viewBox="0 0 8 8" aria-hidden="true"><path d="M0 0h8L4 8z" fill="#fff" /></svg>
);
const ThermalLogo = () => (
  <svg width="16" height="16" viewBox="0 0 16 16" aria-hidden="true">
    <path d="M3 0h9l4 3v10l-3 3H4l-4-3V3z" fill="#1822c8" />
    <path d="M4 1h7l4 3v7l-3 3H6L1 10V4z" fill="#10c8e0" />
    <path d="M4 2h6l4 3v5l-3 2H7L2 9V4z" fill="#20c020" />
    <path d="M4 3h6l3 3-2 4H7L3 7z" fill="#f0e020" />
    <path d="M6 3h3l3 3-3 3-4-2z" fill="#e03010" />
    <path d="M7 5h2v2H7z" fill="#f0e020" stroke="#402010" />
    <path d="M4 11l4-2v6M10 11v4" fill="none" stroke="#102040" />
  </svg>
);
const Restore = ({ color = '#fff', size = 10 }: { color?: string; size?: number }) => (
  <svg width={size} height={size} viewBox="0 0 10 10" fill="none" stroke={color} aria-hidden="true">
    <path d="M.5 3.500h6v6h-6zM3 3.500v-3h6.500v6h-3" />
  </svg>
);
const Cross = ({ color = '#fff', size = 8, weight = 2 }: { color?: string; size?: number; weight?: number }) => (
  <svg width={size} height={size} viewBox="0 0 8 8" aria-hidden="true">
    <path d="M.5 .5l7 7M7.500 .5l-7 7" stroke={color} strokeWidth={weight} />
  </svg>
);

/* '|' is a separator, ':' a grip, '+' in front marks a pressed button */
const Tools = ({ list }: { list: string }) => (
  <>
    {list.split(' ').map((t, i) => {
      if (t === '|') return <Sep key={i} />;
      if (t === ':') return <Grip key={i} />;
      if (t === 'v') return <CaretButton key={i} aria-label="More"><svg width="7" height="8" viewBox="0 0 7 8" aria-hidden="true"><path d="M0 0h7L3.500 8z" fill="#fff" /></svg></CaretButton>;
      const on = t[0] === '+';
      const name = on ? t.slice(1) : t;
      return <ToolButton key={i} $on={on} aria-label={name}><Icon name={name} /></ToolButton>;
    })}
  </>
);

/* ---------- data ---------- */
const menus = ['File', 'Edit', 'Distribution', 'View', 'Setup', 'Tools', 'Help'];

const flow: { title: string; items: string[] }[] = [
  { title: 'Manage Layout', items: ['Load Layout File'] },
  { title: 'Simulation Mode', items: ['Enable IR Drop Analysis Mode'] },
  { title: 'Initial Setup', items: ['Check Stackup', 'Set up P/G Nets', 'Optional: Set up Plating Thickness', 'Optional: Set up Board Temperature Map', 'Optional: Check Net Integrity'] },
  { title: 'PowerTree Setup', items: ['One-step to Create Design', 'Launch PowerTree', 'Extract PowerTree in Design', 'Apply PowerTree'] },
  { title: 'Component Model Setup', items: ['Manage Libraries', 'Launch Analysis Model Manager', 'Assign Model'] },
  { title: 'Voltage Drop Analysis Setup', items: ['Set up VRMs', 'Set up Sinks', 'Set up DC-DC/LDO', 'Set up Discretes'] },
];

const vrms: [string, string, string][] = [
  ...['C525', 'C521', 'C513', 'C505', 'C504'].map(c => [`VRM_${c}_VDD_CPU_AVS_REG_1_DGND_1`, '0.8', '10.75'] as [string, string, string]),
  ...['C528', 'C526', 'C524', 'C523', 'C514', 'C503'].map(c => [`VRM_${c}_VDD_CPU_AVS_REG_2_DGND_1`, '0.8', '10.75'] as [string, string, string]),
  ...['C717_1', 'C716_2', 'C711_1', 'C704_2', 'C718_1', 'C715_1', 'C712_2', 'C703_2'].map(c => {
    const [id, reg] = c.split('_');
    return [`VRM_${id}_VDD_CORE_0V8_REG_${reg}_DGND_1`, '0.8', '7.6'] as [string, string, string];
  }),
  ['VRM_C532_VDD_MCU_0V85_REG_DGND_1', '0.85', '1.17'],
  ['VRM_C531_VDD_MCU_0V85_REG_DGND_1', '0.85', '1.17'],
  ['VRM_C624_VDD_DDR_1V1_REG_DGND_1', '1.1', '1.065'],
  ['VRM_C623_VDD_DDR_1V1_REG_DGND_1', '1.1', '1.065'],
];

const swatch: Record<string, string> = {
  f: '#006400', g: '#008000', p: '#8b008b', n: '#00008b', o: '#808000', t: '#008b8b', y: '#ffff00',
  r: '#ff0000', d: '#8b0000', m: '#ff00ff', b: '#0000ff', c: '#ff4818', l: '#00ff00',
};
/* name : colour code : flags (x checked, e expanded, k child) */
const nets = `PHY1_VDD33:f PHY1_VDDO:p VCAP_MCU_VDDS0:f VCAP_MCU_VDDS1:g VCAP_MCU_VDDS2:n VCAP_VDDS0:o VCAP_VDDS2:t VCAP_VDDS5:f
VCC1V2_PG:y VCC1V2_SYS:r VCC1V25_SYS:y VCC3V3_SYS:y VCC3V3_SYS_MON:p VCC5V_SYS:f VCC5V_SYS_MON:t VCCA_3V3:t VCCCAN_5V:d VCCUSB:o
VCCUSB_5V:n VDD1V2_SERA:m VDD1V2_SERB:p VDD1V2_SERC:t VDD1V2_SERD:r VDD1_DDR_1V8:p VDD1_DDR_1V8_REG:o VDD2Q_DDR_1V1:r
VDDAR_CORE_0V85:t VDDAR_CPU_0V85:b VDDAR_MCU_0V85:o VDDA_0P8_CSIRX:b VDDA_0P8_DSITX:b VDDA_0P8_SERDES:n VDDA_0P8_SERDES_C:b
VDDA_0P8_USB:f VDDA_1P8_CSIRX:p VDDA_1P8_DSITX:o VDDA_1P8_SERDES:f VDDA_1P8_USB:g VDDA_ADC_1V8:t VDDI2C_85:n VDDIO_85:t
VDD_CORE_0V8:f VDD_CORE_0V8_REG:g:xe VDD_CORE_0V8_REG_1:t:xk VDD_CORE_0V8_REG_2:d:xk VDD_CPU_AVS:g VDD_CPU_AVS_REG:y:xe
VDD_CPU_AVS_REG_1:c:xk VDD_CPU_AVS_REG_2:l:xk VDD_DDR_1V1:d VDD_DDR_1V1_REG:b:x VDD_FPD_1V1:y VDD_GPIORET_3V3:b
VDD_GPIORET_3V3_REG:p VDD_IO_1V8:n VDD_IO_1V8_REG:d VDD_IO_3V3:g VDD_IO_EMMC_1V8:b VDD_LEOA_BUCK_SW1:b`
  .split(/\s+/)
  .map(s => {
    const [name, color, flags = ''] = s.split(':');
    return { name, color: swatch[color], checked: flags.includes('x'), open: flags.includes('e'), child: flags.includes('k') };
  });

/* ---------- rulers ---------- */
const STEP = 43.27;
const ticks = (first: number, count: number) =>
  Array.from({ length: count }, (_, i) => ({ at: Math.round(first + (i * STEP) / 10), kind: i % 10 === 0 ? 2 : i % 5 === 0 ? 1 : 0, n: i / 10 }));

const TopRuler = () => (
  <svg shapeRendering="crispEdges" aria-hidden="true">
    <path d="M0 .5H4000M0 27.500H4000" stroke="#7a7a7a" />
    <path d="M1 21.500H4000" stroke="#b4b4b4" />
    {ticks(1, 430).map((t, i) => (
      <React.Fragment key={i}>
        <path d={`M${t.at + 0.5} 21V${[18, 15, 11][t.kind]}`} stroke="#b4b4b4" />
        {t.kind === 2 && <text x={t.at + 2} y="12">{-90 + t.n * 10}</text>}
      </React.Fragment>
    ))}
    <path d="M1861.500 0V28" stroke={C.cyan} />
    <path d="M1861.500 10V21" stroke="#c03a3a" />
  </svg>
);
const SideRuler = () => (
  <svg shapeRendering="crispEdges" aria-hidden="true">
    <path d="M.5 0V2000M27.500 0V2000" stroke="#7a7a7a" />
    <path d="M21.500 0V2000" stroke="#b4b4b4" />
    {ticks(-1, 115).map((t, i) => (
      <React.Fragment key={i}>
        <path d={`M21 ${t.at + 0.5}H${[18, 15, 11][t.kind]}`} stroke="#b4b4b4" />
        {t.kind === 2 && <text transform={`translate(6 ${t.at + 2}) rotate(90)`}>{180 - t.n * 10}</text>}
      </React.Fragment>
    ))}
    <path d="M0 326.500H28" stroke={C.cyan} />
  </svg>
);

/* ---------- board drawing ---------- */
const G = '#00ff00';
const noise = (a: number, b: number) => {
  const v = Math.sin(a * 127.1 + b * 311.7) * 43758.5453;
  return v - Math.floor(v);
};
const pads = (list: string) => list.trim().split(/\s+/).map(s => {
  const [x, y, w, h] = s.split(',');
  return `M${x} ${y}h${w}v${h}h-${w}z`;
}).join('');
/* staggered pads along parallel diagonals, dir 1 falls to the right and -1 to the left */
const stripes = (x: number, y: number, w: number, h: number, dir: number, keep: number) => {
  let d = '';
  for (let j = 0; j * 9 < h; j++) {
    for (let i = -30; i * 20 < w + 300; i++) {
      const px = x + i * 20 + dir * j * 8;
      if (px < x || px > x + w - 9 || noise(i + x, j + y) > keep) continue;
      d += `M${px} ${y + j * 9}h10v12h-10z`;
    }
  }
  return d;
};
const cells = (x: number, y: number, cols: number, rows: number, dx: number, dy: number, keep: number) => {
  let d = '';
  for (let j = 0; j < rows; j++) for (let i = 0; i < cols; i++) {
    const n = noise(i + x, j * 3 + y);
    if (n > keep) continue;
    d += `M${x + i * dx + Math.round(n * 4)} ${y + j * dy}h9v12h-9z`;
    if (n < keep / 2) d += `M${x + i * dx + 6} ${y + j * dy + 9}h8v6h-8z`;
  }
  return d;
};
const loose = pads(`
301,123,27,18 301,230,62,20 467,229,63,30 387,246,17,9 559,216,27,21 593,219,23,20 632,216,10,9 632,240,10,11 622,264,28,21
740,195,10,12 674,210,5,6 688,225,15,27 740,225,15,27 791,225,15,27 845,225,15,27 897,225,15,27 916,231,10,12 948,228,17,21 978,228,17,21
943,192,10,11 970,189,10,12 956,205,6,8 1017,171,10,12 1041,156,12,12 1063,156,10,12 1030,105,5,12 1057,192,10,10 1022,204,5,6
669,255,6,30 701,255,9,12 701,270,9,15 735,255,9,12 735,270,9,15 769,255,9,12 769,270,9,15 804,255,9,12 804,270,9,15 838,255,9,12 838,270,9,15 872,255,7,30 904,255,10,12 904,270,10,15 904,291,10,12 883,286,6,11
657,300,9,12 670,300,9,11 664,336,11,9 527,291,10,12 252,270,15,32 252,312,15,34 448,291,17,33 448,333,10,24 452,348,20,20 430,330,9,12 421,345,10,12 355,330,10,12 380,357,9,12 403,372,12,12
277,372,9,32 274,429,14,45 275,465,13,38 306,420,20,12 305,488,8,11 317,488,6,14 355,484,9,26 427,492,17,36 331,402,61,74 385,433,24,5
279,573,15,33 421,570,19,33 475,591,10,9 497,558,10,12 551,606,9,12 637,612,10,12 398,640,9,12 398,654,9,12 448,672,10,12 415,694,6,9 366,702,11,15 435,717,10,24 255,729,17,18 365,743,50,5 418,743,12,5 475,735,20,12
639,375,25,18 625,417,22,18 648,424,24,4 661,402,10,10 661,429,10,10 655,465,14,9 648,499,9,12 676,514,10,12 616,492,10,12 675,372,9,9
710,618,10,12 717,600,3,20 710,669,9,15 742,669,9,15 801,633,10,21 885,318,14,14 914,348,10,12 932,366,9,12 909,360,12,9 909,390,10,12 923,388,12,12 914,414,9,12 919,447,10,12 930,480,12,12 899,519,12,12 914,546,10,12
956,637,9,12 1004,624,10,12 1083,621,10,12 1115,639,10,9 1002,654,12,10 1030,652,10,12 982,693,10,12 1001,687,11,9 1102,702,10,12 1102,717,10,12
889,633,10,12 870,648,10,12 880,660,10,15 901,654,9,15 914,642,10,12 885,684,10,12 875,696,10,12 899,669,9,12 733,738,8,9`);
const cluster = pads(`1178,69,10,12 1208,72,10,12 1213,156,36,44 1186,174,10,9 1161,213,15,14 1180,211,10,10 1193,213,12,6 1150,114,14,12 1157,129,12,12 1170,99,10,12 1196,102,12,9 1204,120,10,15 1172,141,14,12 1187,147,10,14 1182,105,10,12 1165,136,12,12 1227,255,10,9 1258,255,10,9 1286,273,10,12`);
const colored: [string, string][] = [
  ['#ff80ff', '27,330,7,9 703,738,7,9'], ['#ff4818', '51,330,8,9 703,723,7,9 764,738,10,9'], ['#ffffff', '73,330,8,9 24,402,8,9 91,396,7,12 782,177,17,12 973,288,7,9 54,729,7,12 654,711,10,21 794,738,7,9 764,723,10,9 853,672,7,9 853,657,7,9'],
  ['#c8ff30', '49,345,7,9'], ['#808080', '24,384,8,12 100,729,8,12 769,699,10,21'], ['#808000', '47,384,7,12 784,681,17,15'],
  ['#800080', '71,384,7,12 857,186,10,9'], ['#800000', '93,384,7,12 965,453,8,9'], ['#ffff00', '838,174,17,15 960,288,8,9 733,723,8,9'],
  ['#000090', '703,702,12,18'], ['#ff00ff', '733,702,14,18'], ['#22cdd2', '806,657,7,9 806,672,7,9'], ['#008080', '666,735,8,9 964,465,9,9'],
  ['#c0c0c0', '1377,423,22,18 855,633,10,21'], ['#fff4c0', '794,723,7,9'], ['#20ff40', '1031,516,18,12'],
];
const rings: [number, string][] = [[271, '#00ffff'], [376, '#28c8d8'], [480, '#ff00ff'], [585, '#008080'], [690, '#ffff00']];
const edge = { stroke: '#848484', strokeWidth: 1, vectorEffect: 'non-scaling-stroke' as const };
const wire = { stroke: G, strokeWidth: 1, fill: 'none', vectorEffect: 'non-scaling-stroke' as const };

const BoardDrawing = () => (
  <svg shapeRendering="crispEdges" role="img" aria-label="Board layout">
    <g transform="translate(301 247) scale(0.40816 0.33333)">
      <path d="M16 800V28H1489V800" {...wire} />
      <path
        d="M214 800V80Q216 32 258 30H1445Q1485 36 1487 84V800H1461V146L1455 140H1440Q1400 132 1397 92V70L1390 62H1340L1334 68V800H1306V68L1300 62H862L856 70V92Q850 138 808 140Q766 138 760 92V70L755 62H310L304 70V88Q298 138 258 140L248 140L241 150V800Z"
        fill={G} {...edge}
      />
      {rings.map(([y, color]) => (
        <g key={y}>
          <ellipse cx="171" cy={y} rx="39" ry="48" fill={color} />
          <path d={`M153 ${y - 21}h37v42h-37z`} fill="#000" {...edge} />
          <path d={`M143 ${y - 33}h57v66h-57z`} fill="none" {...edge} />
          <path d={`M153 ${y - 21}h8l-8 9zM190 ${y + 21}h-8l8-9z`} fill={color} />
        </g>
      ))}
      <path d={loose} fill={G} />
      <path d="M336 410h54v60M345 410v12M356 410v12M367 410v12M378 410v12" fill="none" stroke="#000" strokeWidth="4" strokeDasharray="6 7" />
      <path d="M470 135L489 106H531V136Z" fill={G} {...edge} />
      <path d="M301 230h62v20h-62zM467 229h63v30h-63z" fill="none" {...edge} />
      <path d="M284 267H310L330 295H405L412 286H431V318L424 328H302V347H285Z" fill={G} {...edge} />
      <path d="M300 163H327V145H347V220H327V206H300Z" fill="#800000" {...edge} />
      <path d="M332 152v60M341 152v60" stroke="#200" strokeWidth="4" strokeDasharray="4 12" />
      <path d="M484 145h20v75h-20z" fill="#008080" {...edge} />
      <path d="M407 135h9v30h17v15h32v6h-31v15h-9l-3 5v24h-10v-27h-4v-6h-8v-12h-33v-6h32v-15h8z" fill={G} />
      <path d="M447 450H467V471L484 487V528H487V553H442V528H460V500L447 482Z" fill="#ffff80" {...edge} />
      <path d="M312 546H340L350 558H374L386 544H411V564L403 575V604H315L312 598Z" fill="#ff4818" {...edge} />
      <path d="M398 583h33v12h-33z" fill="#555" stroke="#aaa" strokeWidth="1" vectorEffect="non-scaling-stroke" />
      <path d="M418 400l8-14h36v60h-30l-14-20z" {...wire} />
      <path d={pads('416,405,8,15 420,428,12,12 436,444,10,6 458,386,8,8 459,420,7,9 476,388,6,9')} fill={G} />
      <path d={cells(507, 368, 9, 5, 12, 14, 0.62) + cells(507, 460, 9, 6, 12, 15, 0.62) + pads('585,348,10,18 570,444,12,12 545,531,10,20 570,531,8,20 586,531,10,20 522,531,14,12')} fill={G} />
      <path d={stripes(695, 318, 74, 60, 1, 0.96) + stripes(728, 308, 24, 10, 1, 1) + stripes(780, 318, 76, 40, -1, 0.96) + stripes(800, 308, 24, 10, 1, 1)} fill={G} />
      <path d={stripes(703, 378, 72, 76, 1, 0.96) + stripes(778, 366, 130, 84, -1, 0.5)} fill={G} />
      <path d={stripes(697, 466, 110, 80, -1, 0.86) + stripes(806, 445, 110, 105, 1, 0.86) + stripes(720, 552, 188, 48, -1, 0.84) + stripes(776, 440, 60, 30, 1, 0.9)} fill={G} />
      <path d="M680 375l16 20M752 450l30 -20" {...wire} />
      <path d={cells(505, 632, 7, 6, 12, 16, 0.35) + cells(1035, 680, 5, 4, 12, 18, 0.6) + cells(985, 650, 4, 1, 10, 16, 0.5)} fill={G} />
      <path d="M1040 690q25 -20 50 20l-4 50" {...wire} />
      <path d="M961 678L1012 738V780H912V738Z" fill={G} />
      <path d="M958 372q6-26 24-20l8 8h22v40l-18 2h-24zM960 415q14-10 26-2h26v40l-26 6v16h-24z" {...wire} />
      <path d={pads('962,360,12,14 958,384,10,14 992,360,12,10 1002,390,11,10 976,400,12,10 960,425,10,14 960,440,12,14 992,414,12,10 1004,430,9,12 988,450,10,10')} fill={G} />
      {[0, 174, 351, 528].map(dy => (
        <g key={dy} transform={`translate(0 ${dy})`}>
          <path d="M1148 110l16-10h16l8-6 10 12h14v26l-20 12-12 8-20-8-12-18z" {...wire} />
          <path d={cluster} fill={G} />
        </g>
      ))}
      {[235, 683].map(y => <path key={y} d={`M1342 ${y - 8}l5-5h9l5 5v14l-6 6h-8l-5-5z`} {...wire} />)}
      <path d={Array.from({ length: 7 }, (_, i) => `M1360 ${261 + i * 19.500}h10v12h-10z`).join('')} fill={G} />
      <path d={Array.from({ length: 14 }, (_, i) => `M1434 ${348 + i * 22.800}h9v11h-9z` + (i ? `M1419 ${348 + i * 22.800}h9v11h-9z` : '')).join('')} fill={G} />
      {colored.map(([color, list]) => <path key={color} d={pads(list)} fill={color} />)}
    </g>
  </svg>
);

/* ---------- small drawings in lists ---------- */
const NetOutline = ({ blank }: { blank: boolean }) => (
  <svg width="12" height="12" viewBox="0 0 12 12" aria-hidden="true">
    <path d="M0 0h12v12H0z" fill="#fff" />
    {!blank && <path d="M4 2.500h6v3.500l-3 4H2.500V6z" fill="none" stroke="#555" strokeDasharray="1 1" />}
  </svg>
);
const NetSwatch = ({ color, multi }: { color: string; multi: boolean }) => (
  <svg width="12" height="12" viewBox="0 0 12 12" aria-hidden="true">
    <path d="M0 0h12v12H0z" fill={color} />
    <path d="M.5 11V.5H12" fill="none" stroke="#ddd" />
    <path d="M1 9h3l4-5h3" fill="none" stroke="#000" />
    <path d="M1 10h3.500l4-5H11" fill="none" stroke="#fff" />
    {multi && <path d="M1 5l4-4M7 11l4-4M2 7l6-6" fill="none" stroke="#000" />}
  </svg>
);
const PinIcon = ({ on }: { on?: boolean }) => (
  <svg width="16" height="16" viewBox="0 0 16 16" aria-hidden="true">
    <path d="M0 0h16v16H0z" fill={on ? '#b4d4f2' : '#fff'} />
    <path d="M2 2v13M2 5h11M2 12h11" fill="none" stroke={on ? '#087848' : '#087808'} strokeWidth="2" />
  </svg>
);
const Lens = () => (
  <svg width="16" height="18" viewBox="0 0 16 18" aria-hidden="true">
    <path d="M2 16l5-6" stroke="#c8c8c8" strokeWidth="3" />
    <circle cx="10" cy="6" r="4.600" fill="#cfe2fb" stroke="#9fb4cc" strokeWidth="1.500" />
  </svg>
);
const NewRowMark = () => (
  <svg width="11" height="14" viewBox="0 0 11 14" aria-hidden="true">
    <path d="M5 0v8M2 2l6 4M8 1L2 6" stroke="#e8e060" />
    <path d="M1 6v7h9" fill="none" stroke="#111" strokeDasharray="1 1" />
  </svg>
);
const CheckMark = () => (
  <svg width="14" height="12" viewBox="0 0 14 12" aria-hidden="true">
    <path d="M1 6l4 4 8-9" fill="none" stroke="#8fb4f4" strokeWidth="2.400" />
  </svg>
);

const PanelButtons = ({ help = true }: { help?: boolean }) => (
  <>
    {help && <HeadButton aria-label="Help">?</HeadButton>}
    <HeadButton $w={help ? 23 : 16} aria-label="Float"><Restore /></HeadButton>
    <HeadButton $w={help ? 23 : 16} aria-label="Close"><Cross /></HeadButton>
  </>
);

const cols: [string, number][] = [['VRM Name', 328], ['Nominal Voltage (V)', 140], ['Output Tolerance (%)', 160], ['Sense Voltage (V)', 140], ['Output Current (A)', 140]];

export default function App() {
  return (
    <>
      <Global />
      <Shell>
        <TitleBar>
          <ThermalLogo />
          <TitleText>Layout Workbench [4D RADAR MAIN BOARD_0919.spd 2D View]</TitleText>
          <WindowButton aria-label="Minimize"><svg width="10" height="1" aria-hidden="true"><path d="M0 .5h10" stroke="#888" /></svg></WindowButton>
          <WindowButton aria-label="Restore"><Restore color="#888" /></WindowButton>
          <WindowButton aria-label="Close"><Cross color="#888" size={10} weight={1} /></WindowButton>
        </TitleBar>
        <MenuBar>
          {menus.map(m => <MenuItem key={m}>{m}</MenuItem>)}
          <Brand>c<Accent>a</Accent>dence</Brand>
        </MenuBar>
        <Bar $h={23}>
          <Tools list=": newDoc folder save | undo v redo v | rulerA rulerB : tealFolder : pause play stop : docUp docDown docSave : copyFolder copySave docFind | rec playGreen : gear" />
        </Bar>
        <Workspace>
          <MainColumn>
            <TopRow>
              <Panel>
                <PanelHeader $h={19}>
                  <PanelTitle $bold $big>PowerDC</PanelTitle>
                  <PanelButtons help={false} />
                </PanelHeader>
                <FlowBody>
                  <FlowList>
                    <FlowTitle>Single-Board/Package IR Drop Analysis</FlowTitle>
                    {flow.map(g => (
                      <React.Fragment key={g.title}>
                        <FlowGroup>
                          <svg width="8" height="7" viewBox="0 0 8 7" aria-hidden="true"><path d="M1 0h6L4 7z" fill="#fff" /></svg>
                          {g.title}
                        </FlowGroup>
                        {g.items.map(t => (
                          <FlowItem key={t} $on={t === 'Set up P/G Nets'}>
                            <FlowMark>{t.startsWith('Enable') && <CheckMark />}</FlowMark>
                            {t}
                          </FlowItem>
                        ))}
                      </React.Fragment>
                    ))}
                  </FlowList>
                  <ScrollTrack><ScrollThumb $w={8} $h="50%" /></ScrollTrack>
                </FlowBody>
              </Panel>
              <Panel>
                <TabStrip>
                  <ViewTab>
                    <ThermalLogo />
                    2D View
                    <HeadButton aria-label="Close view"><Cross /></HeadButton>
                  </ViewTab>
                </TabStrip>
                <Bar $h={22}>
                  <Tools list=": rect rectUndo circle extent blueRect : gridPlus | rectPlus rectMinus circPlus circMinus polyPlus polyMinus | polyRed polyMove polyAdd polyDel : cutYellow cutGreen cutMove cutAdd cutDel cutTeal table : sun" />
                  <Slider type="range" aria-label="Brightness" defaultValue={50} />
                  <Tools list="| palette : | markN markS markX markC markCC +stars" />
                </Bar>
                <Bar $h={24}>
                  <Tools list=": dotPlus dotBox | padA padB | padV padSwap padH | curve | bend | cutBox emptyBox | binoc" />
                  <ComboWrap $w={125}><Combo aria-label="Find object"><option></option></Combo></ComboWrap>
                  <Tools list="search | hundred | fork :" />
                  <ComboWrap $w={145}><Combo aria-label="Net filter"><option>All Enabled Net(s)</option></Combo></ComboWrap>
                  <Tools list="+shape +hline +arc +bend2 vline +strA +strB dot link chip | off | +pick | grayDocs moveArrow cross docs" />
                </Bar>
                <ViewGrid>
                  <Corner />
                  <RulerCell><TopRuler /></RulerCell>
                  <RulerCell><SideRuler /></RulerCell>
                  <Board><BoardDrawing /></Board>
                </ViewGrid>
              </Panel>
            </TopRow>
            <Panel>
              <PanelHeader $h={23}>
                <PanelTitle>Voltage Drop Analysis Setup -&gt; Set up VRMs -&gt; Set up VRMs</PanelTitle>
                <PanelButtons />
              </PanelHeader>
              <DockTabs>
                <DockTab $on>Set up VRMs</DockTab>
                <DockTab>Set up Multi-Phase VRMs</DockTab>
              </DockTabs>
              <DockBody>
                <Pane>
                  <Grid>
                    <thead>
                      <tr>
                        <Th $w={20} aria-label="Enabled" /><Th $w={16} aria-label="State" />
                        {cols.map(([c, w]) => <Th key={c} $w={w}>{c.startsWith('Nominal') && <SortMark />}{c}</Th>)}
                      </tr>
                    </thead>
                    <tbody>
                      {vrms.map(([name, v, a], i) => (
                        <Tr key={name} $on={i === 0} $odd={i % 2 === 1}>
                          <Td $check><NetLabel><Tick $s={10} type="checkbox" defaultChecked aria-label={name} /></NetLabel></Td>
                          <Td /><Td>{name}</Td><Td>{v}</Td><Td $dim>Not In Use</Td><Td>{v}</Td><Td>{a}</Td>
                        </Tr>
                      ))}
                      <Tr $odd>
                        <Td $check><NetLabel><Tick $s={10} type="checkbox" defaultChecked aria-label="New VRM" /></NetLabel></Td>
                        <Td><NewRowMark /></Td><Td /><Td /><Td $dim /><Td /><Td />
                      </Tr>
                    </tbody>
                  </Grid>
                </Pane>
                <Pane $split>
                  <ul>
                    {['Positive Pin (VDD_CPU_AVS_REG_1)', 'Negative Pin (DGND_1)', 'Positive Sense Pin', 'Negative Sense Pin'].map((t, i) => (
                      <PinRow key={t} $odd={i % 2 === 1}>
                        <PinArrow>{i < 2 && <svg width="7" height="9" viewBox="0 0 7 9" aria-hidden="true"><path d="M0 0v9l7-4.500z" fill="#fff" /></svg>}</PinArrow>
                        <PinLabel $on={i === 2}><PinIcon on={i === 2} />{t}</PinLabel>
                      </PinRow>
                    ))}
                  </ul>
                </Pane>
                <Pane $split>
                  <WideTable>
                    <thead><tr><ThinTh $w={139}>Node Name</ThinTh><ThinTh $w={50}>Net</ThinTh><ThinTh>Resistance (Ohm)</ThinTh></tr></thead>
                  </WideTable>
                </Pane>
              </DockBody>
            </Panel>
            <FootTabs>
              <FootTab>Folder Browser</FootTab>
              <FootTab>TCL Command</FootTab>
              <FootTab $on>Voltage Drop Analysis Setup -&gt; Set up VRMs -&gt; Set up VRMs</FootTab>
            </FootTabs>
          </MainColumn>
          <NetColumn>
            <PanelHeader $h={23}>
              <PanelTitle $big>Net Manager</PanelTitle>
              <PanelButtons />
            </PanelHeader>
            <FindBox>
              <FindLegend>Find</FindLegend>
              <FindRow>
                <label htmlFor="net">Net:</label>
                <ComboWrap><Combo id="net"><option></option></Combo></ComboWrap>
                <FindButton aria-label="Find net"><Lens /></FindButton>
              </FindRow>
              <ModeRow>
                Search Mode:
                <RadioLabel><Radio type="radio" name="mode" defaultChecked />Normal</RadioLabel>
                <RadioLabel><Radio type="radio" name="mode" />Regular expression</RadioLabel>
              </ModeRow>
            </FindBox>
            <NetFrame>
              <FindRow><ComboWrap><Combo aria-label="Show nets"><option>Show Volt &amp; P/G</option></Combo></ComboWrap></FindRow>
              <GeneralBox>
                <GeneralLegend>General</GeneralLegend>
                <NetList>
                  <NetInner>
                    <NetHead>
                      <NetHeadCell><SortMark />Net List (Sort All)</NetHeadCell>
                      <NetHeadCell $edge>Pairing</NetHeadCell>
                    </NetHead>
                    <ul>
                      {nets.map((n, i) => (
                        <NetRow key={n.name} $odd={i % 2 === 1} $child={n.child}>
                          <NetArrow>{n.open && <Down />}</NetArrow>
                          <NetLabel>
                            <Tick $s={9} type="checkbox" defaultChecked={n.checked} />
                            <NetOutline blank={n.checked} />
                            <NetSwatch color={n.color} multi={n.open} />
                            <span>{n.name}</span>
                          </NetLabel>
                        </NetRow>
                      ))}
                    </ul>
                  </NetInner>
                  <VScroll><ScrollThumb $w={8} $h="41px" /></VScroll>
                  <HScroll><HThumb /></HScroll>
                </NetList>
                <OptionRow>
                  <OptionLabel><Tick $s={14} type="checkbox" />Gray Disabled</OptionLabel>
                  <OptionLabel><Tick $s={14} type="checkbox" defaultChecked />Hide Disabled</OptionLabel>
                </OptionRow>
              </GeneralBox>
            </NetFrame>
            <FootTabs>
              <FootTab $on>Net Manager</FootTab>
              <FootTab>Layer Selection</FootTab>
              <FootNote>CSDN @RyanQiu</FootNote>
            </FootTabs>
          </NetColumn>
        </Workspace>
        <StatusBar />
      </Shell>
    </>
  );
}
